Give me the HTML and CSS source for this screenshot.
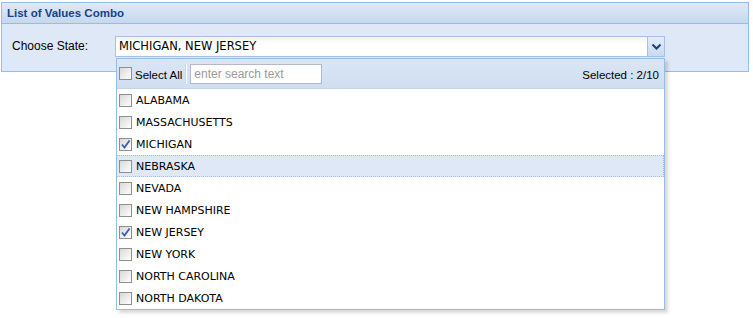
FILE: index.html
```html
<!DOCTYPE html>
<html lang="en">
  <head>
    <meta charset="UTF-8" />
    <title>List of Values Combo</title>
    <link rel="stylesheet" href="styles.css">
  </head>
  <body>
    <div class="panel">
      <div class="panel-header">List of Values Combo</div>
      <div class="panel-body">
        <label class="field-label">Choose State:</label>
        <div class="combo">
          <div class="combo-input">MICHIGAN, NEW JERSEY</div>
          <div class="combo-trigger">
            <svg width="9" height="6" viewBox="0 0 9 6"><path d="M0.5 0.5 L4.5 4.5 L8.5 0.5" fill="none" stroke="#1f3f7a" stroke-width="2"/></svg>
          </div>

          <!-- dropdown list -->
          <div class="combo-list">
            <div class="list-toolbar">
              <span class="check"></span>
              <span class="select-all">Select All</span>
              <span class="tb-sep"></span>
              <input class="search" type="text" placeholder="enter search text">
              <span class="count">Selected : 2/10</span>
            </div>
            <div class="list-items">
              <div class="item"><span class="check"></span>ALABAMA</div>
              <div class="item"><span class="check"></span>MASSACHUSETTS</div>
              <div class="item"><span class="check checked"><svg width="11" height="11" viewBox="0 0 11 11"><path d="M2 5.5 L4.5 8.5 L9.5 1.5" fill="none" stroke="#3a5fb0" stroke-width="1.8"/></svg></span>MICHIGAN</div>
              <div class="item over"><span class="check"></span>NEBRASKA</div>
              <div class="item"><span class="check"></span>NEVADA</div>
              <div class="item"><span class="check"></span>NEW HAMPSHIRE</div>
              <div class="item"><span class="check checked"><svg width="11" height="11" viewBox="0 0 11 11"><path d="M2 5.5 L4.5 8.5 L9.5 1.5" fill="none" stroke="#3a5fb0" stroke-width="1.8"/></svg></span>NEW JERSEY</div>
              <div class="item"><span class="check"></span>NEW YORK</div>
              <div class="item"><span class="check"></span>NORTH CAROLINA</div>
              <div class="item"><span class="check"></span>NORTH DAKOTA</div>
            </div>
          </div>
        </div>
      </div>
    </div>
  </body>
</html>
```

FILE: styles.css
```css
html,
body {
  min-height: 318px;
}

body {
  margin: 0;
  background: #fff;
  font-family: "Liberation Sans", Arial, sans-serif;
  font-size: 12px;
  color: #000;
}

.panel {
  margin: 2px 0 0 1px;
  width: 746px;
  border: 1px solid #99bbe8;
  background: #dfe8f6;
}

.panel-header {
  height: 20px;
  line-height: 20px;
  padding-left: 5px;
  border-bottom: 1px solid #99bbe8;
  background: linear-gradient(to bottom, #dfe9f6, #d3e1f1 45%, #c7d8ee);
  color: #15428b;
  font-weight: bold;
  font-size: 11.5px;
}

.panel-body {
  display: flex;
  align-items: flex-start;
  padding: 12px 0 14px 10px;
}

.field-label {
  width: 103px;
  line-height: 21px;
  color: #000;
}

.combo {
  position: relative;
  display: flex;
}

.combo-input {
  width: 528px;
  height: 19px;
  line-height: 19px;
  padding-left: 3px;
  border: 1px solid #a8c0e6;
  background: linear-gradient(to bottom, #f2f4f0, #fff 40%);
  font-family: "DejaVu Sans", Tahoma, sans-serif;
  font-size: 11.5px;
}

.combo-trigger {
  width: 16px;
  height: 19px;
  border-bottom: 1px solid #a8c0e6;
  border-right: 1px solid #a8c0e6;
  border-top: 1px solid #a8c0e6;
  background: linear-gradient(to bottom, #e4edf9, #c9daf0);
  display: flex;
  align-items: center;
  justify-content: center;
}

.combo-list {
  position: absolute;
  top: 22px;
  left: 1px;
  width: 547px;
  border: 1px solid #99bbe8;
  background: #fff;
  box-shadow: 3px 3px 3px rgba(0, 0, 0, 0.15);
}

.list-toolbar {
  display: flex;
  align-items: center;
  height: 29px;
  padding: 0 5px 0 2px;
  border-bottom: 1px solid #c2d3ec;
  background: linear-gradient(to bottom, #dae6f5, #d0def1);
  font-size: 11.5px;
}

.select-all {
  margin-left: 3px;
  line-height: 14px;
  padding-top: 3px;
}

.tb-sep {
  width: 1px;
  height: 20px;
  margin: 0 3px 0 3px;
  background: #fff;
  border-left: 1px solid #c6d8f0;
}

.search {
  width: 124px;
  height: 16px;
  margin: 0;
  padding: 1px 3px;
  border: 1px solid #b5b8c8;
  background: #fff;
  font-family: "Liberation Sans", Arial, sans-serif;
  font-size: 12px;
}

.search::placeholder {
  color: #9a9a9a;
}

.count {
  margin-left: auto;
  padding-top: 2px;
}

.check {
  flex: none;
  box-sizing: border-box;
  width: 13px;
  height: 13px;
  border: 1px solid #8f8f8f;
  background: linear-gradient(135deg, #d8d8d8, #f4f4f4 70%, #fff);
  display: flex;
  align-items: center;
  justify-content: center;
}

.item {
  display: flex;
  align-items: center;
  height: 22px;
  padding-left: 2px;
  box-sizing: border-box;
  font-family: "DejaVu Sans", Tahoma, sans-serif;
  font-size: 11px;
}

.item .check {
  margin-right: 4px;
}

.item.over {
  background: #dfe8f6;
  border-top: 1px dotted #a3bae9;
  border-bottom: 1px dotted #a3bae9;
  border-right: 1px dotted #a3bae9;
}
```
